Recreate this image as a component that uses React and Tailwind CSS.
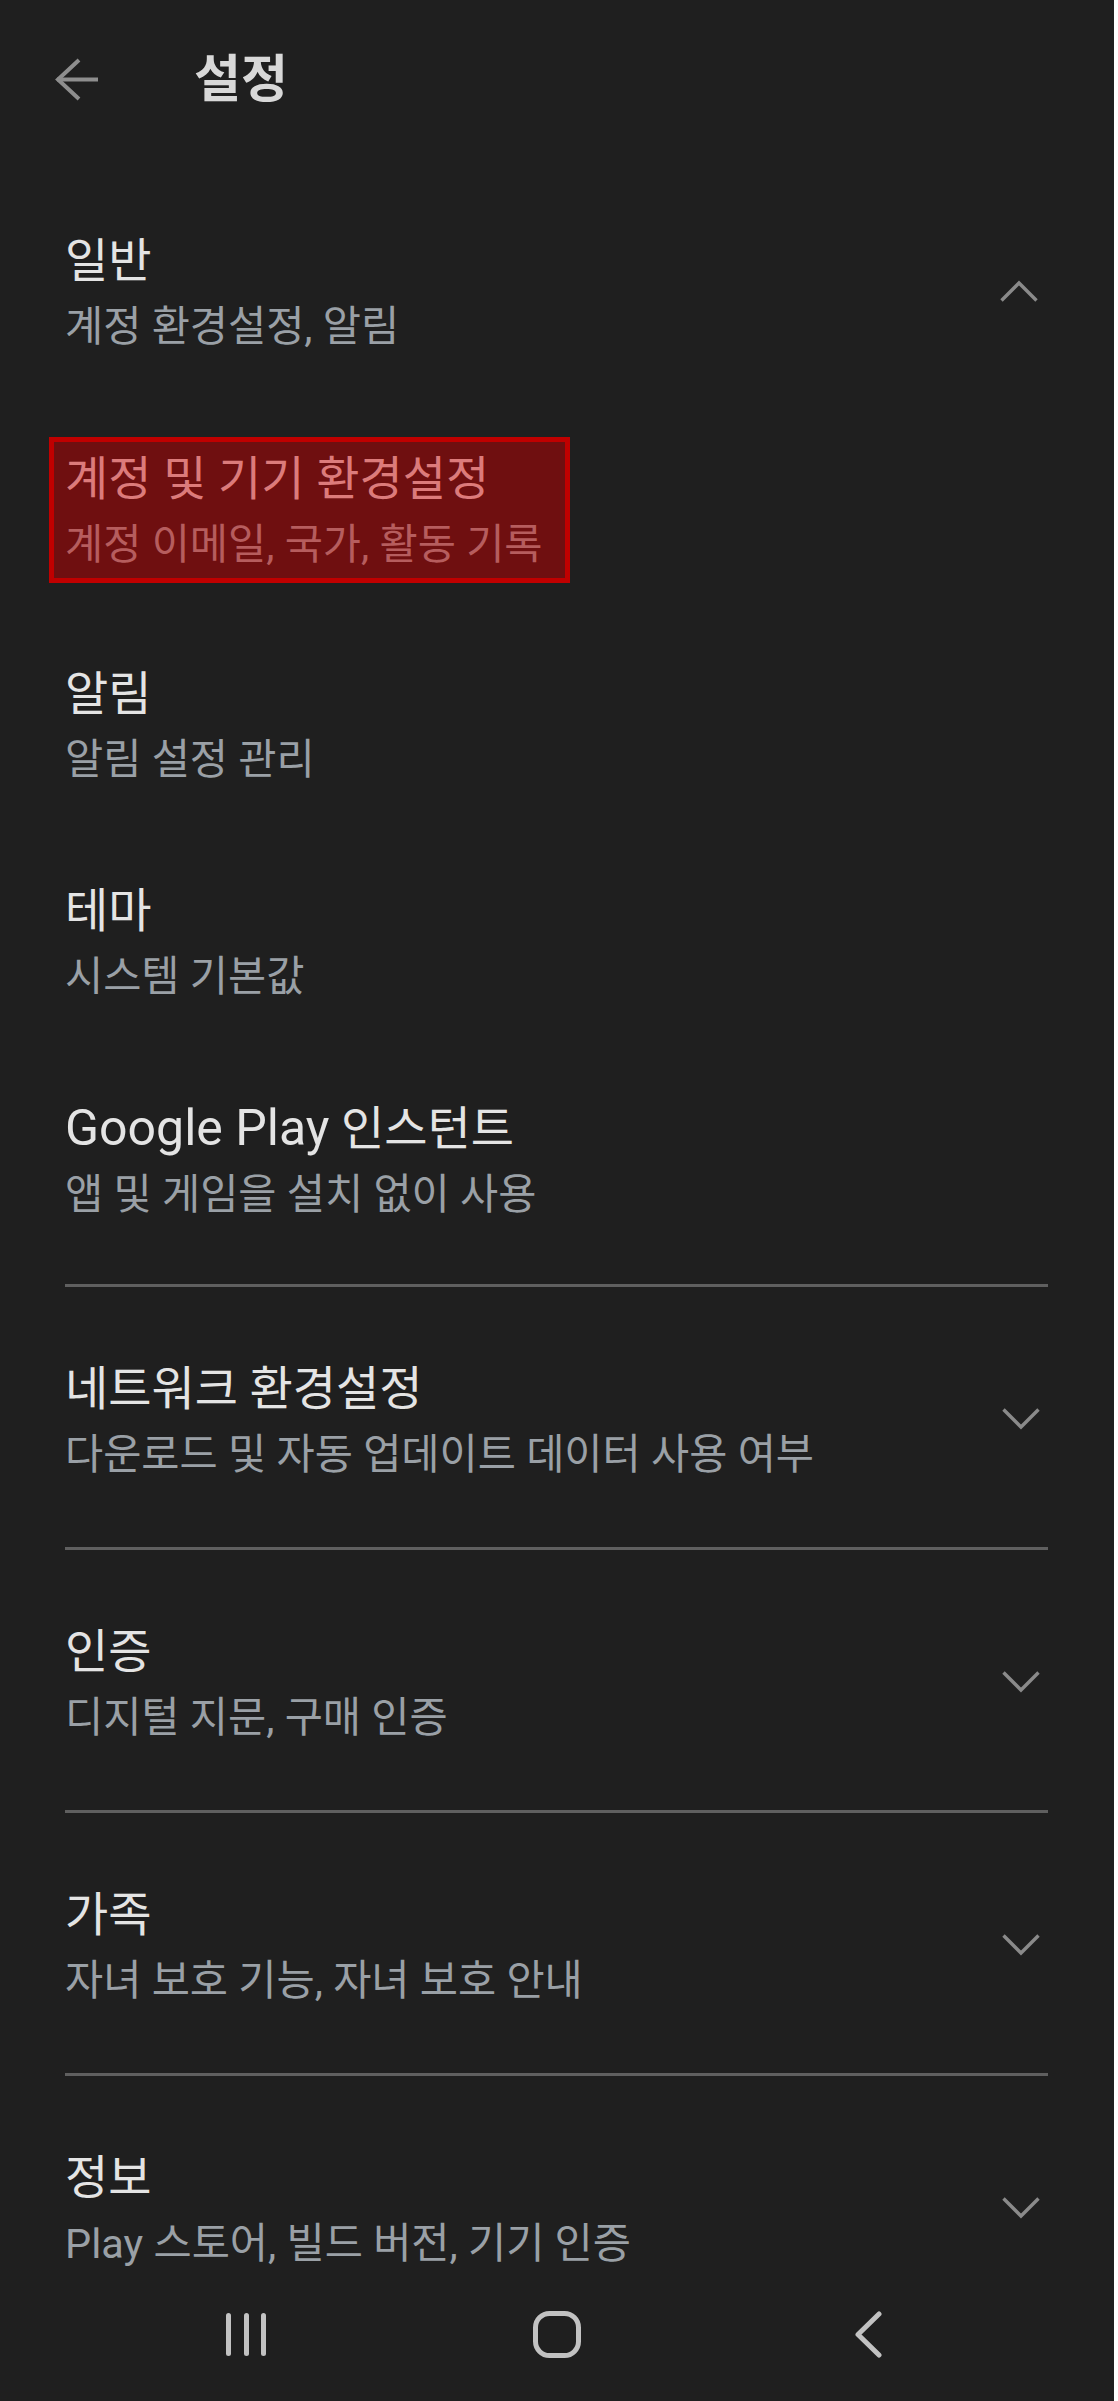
import React from "react";

function TextBlock({ title, sub, titleCls = "text-[#e4e4e4]", subCls = "text-[#9aa0a6]" }) {
  return (
    <div className="flex flex-col whitespace-nowrap pt-[3px]">
      <div className={`text-[47px] leading-[56px] ${titleCls}`}>{title}</div>
      <div className={`mt-[10px] text-[41.5px] leading-[56px] ${subCls}`}>{sub}</div>
    </div>
  );
}

function ChevronUp() {
  return (
    <svg width="40" height="24" viewBox="0 0 40 24" className="mr-[9px] mb-[4px] shrink-0">
      <path d="M2.5 21.5 L20 4 L37.5 21.5" fill="none" stroke="#8a8a8a" strokeWidth="3.4" strokeLinejoin="miter" />
    </svg>
  );
}

function ChevronDown() {
  return (
    <svg width="40" height="24" viewBox="0 0 40 24" className="mr-[7px] mt-[-3px] shrink-0">
      <path d="M2.5 2.5 L20 20 L37.5 2.5" fill="none" stroke="#8a8a8a" strokeWidth="3.4" strokeLinejoin="miter" />
    </svg>
  );
}

const sections = [
  { title: "네트워크 환경설정", sub: "다운로드 및 자동 업데이트 데이터 사용 여부" },
  { title: "인증", sub: "디지털 지문, 구매 인증" },
  { title: "가족", sub: "자녀 보호 기능, 자녀 보호 안내" },
  { title: "정보", sub: "Play 스토어, 빌드 버전, 기기 인증" },
];

export default function App() {
  return (
    <div className="flex h-[2401px] w-[1118px] bg-white font-[Roboto,'Noto_Sans_CJK_KR',sans-serif]">
      <div className="flex h-full w-[1114px] flex-col bg-[#1f1f1f]">
        {/* Header */}
        <div className="flex h-[160px] shrink-0 items-center">
          <svg width="48" height="46" viewBox="0 0 48 46" className="ml-[52px] shrink-0">
            <path d="M5 22.5 H46" fill="none" stroke="#8e8e8e" strokeWidth="4" />
            <path d="M27 3 L6 22.5 L27 42" fill="none" stroke="#8e8e8e" strokeWidth="4" strokeLinejoin="miter" />
          </svg>
          <div className="ml-[94px] text-[51px] font-bold leading-[60px] text-[#d8d8d8]">설정</div>
        </div>

        {/* List */}
        <div className="flex-1 overflow-hidden">
          <div className="pl-[65px] pr-[66px] pt-[22px]">
            <div className="flex items-center pt-[48px] pb-[44px]">
              <div className="flex-1">
                <TextBlock title="일반" sub="계정 환경설정, 알림" />
              </div>
              <ChevronUp />
            </div>

            <div className="pt-[38px] pb-[33px]">
              <div className="-ml-[16px] w-[521px] border-[5px] border-[#c00000] bg-[#6f0f10] pl-[11px] pt-[6px] pb-[5px]">
                <TextBlock
                  title="계정 및 기기 환경설정"
                  sub="계정 이메일, 국가, 활동 기록"
                  titleCls="text-[#dc7b7b]"
                  subCls="text-[#b65d5e]"
                />
              </div>
            </div>

            <div className="pt-[47px] pb-[45px]">
              <TextBlock title="알림" sub="알림 설정 관리" />
            </div>
            <div className="pt-[47px] pb-[45px]">
              <TextBlock title="테마" sub="시스템 기본값" />
            </div>
            <div className="pt-[47px] pb-[61px]">
              <TextBlock
                title={
                  <>
                    <span className="text-[50px]">Google Play</span> 인스턴트
                  </>
                }
                sub="앱 및 게임을 설치 없이 사용"
              />
            </div>

            {sections.map((s) => (
              <div key={s.title} className="flex items-center border-t-[3px] border-[#5f5f5f] pt-[71px] pb-[64px]">
                <div className="flex-1">
                  <TextBlock title={s.title} sub={s.sub} />
                </div>
                <ChevronDown />
              </div>
            ))}
          </div>
        </div>

        {/* Navigation bar */}
        <div className="flex h-[134px] shrink-0 items-center justify-center">
          <div className="flex w-[311px] justify-center">
            <svg width="44" height="47" viewBox="0 0 44 47">
              <rect x="2" y="2" width="5" height="43" rx="2.5" fill="#c2c2c2" />
              <rect x="20" y="2" width="5" height="43" rx="2.5" fill="#c2c2c2" />
              <rect x="37" y="2" width="5" height="43" rx="2.5" fill="#c2c2c2" />
            </svg>
          </div>
          <div className="flex w-[311px] justify-center">
            <svg width="48" height="47" viewBox="0 0 48 47">
              <rect x="2.5" y="2.5" width="43" height="42" rx="14" fill="none" stroke="#c2c2c2" strokeWidth="5" />
            </svg>
          </div>
          <div className="flex w-[311px] justify-center">
            <svg width="30" height="47" viewBox="0 0 30 47">
              <polyline points="26,3 5,23.5 26,44" fill="none" stroke="#c2c2c2" strokeWidth="5" strokeLinecap="round" strokeLinejoin="round" />
            </svg>
          </div>
        </div>
      </div>
      <div className="h-full w-[4px] bg-white" />
    </div>
  );
}
